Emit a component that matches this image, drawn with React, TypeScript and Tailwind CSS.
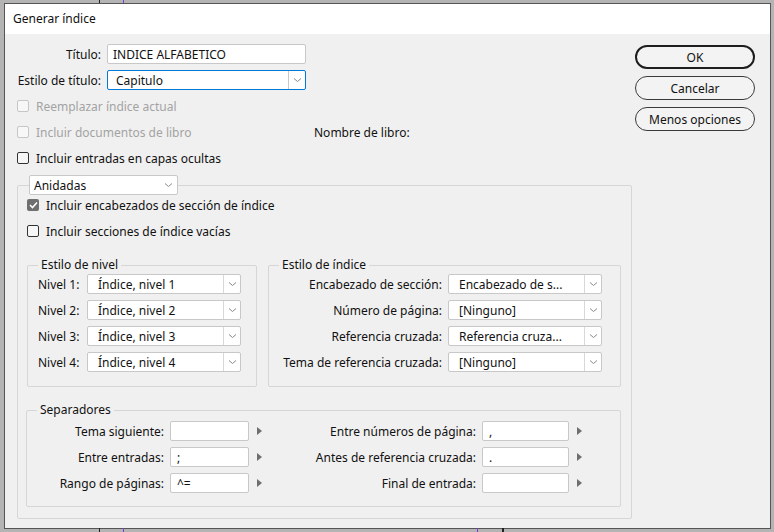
import React from "react";

const font = { fontFamily: '"Noto Sans", "Open Sans", sans-serif' };

function Chevron() {
  return (
    <svg width="9" height="6" viewBox="0 0 9 6" className="shrink-0">
      <path d="M1 1.5 L4.5 4.5 L8 1.5" fill="none" stroke="#8a8a8a" strokeWidth="1" />
    </svg>
  );
}

function Select({
  value,
  width,
  focused,
  pad = "pl-[10px]",
  divider = true,
}: {
  value: string;
  width: string;
  focused?: boolean;
  pad?: string;
  divider?: boolean;
}) {
  return (
    <div
      className={`${width} h-[20px] flex items-stretch bg-white rounded-[2px] border ${
        focused ? "border-[#0078d7]" : "border-[#c8c8c8]"
      }`}
    >
      <div className={`flex-1 flex items-center pt-[1px] ${pad} text-[12px] leading-none text-[#111] whitespace-nowrap overflow-hidden`}>
        {value}
      </div>
      <div
        className={`w-[17px] flex items-center justify-center ${
          divider ? (focused ? "border-l border-[#c8c8c8]" : "border-l border-[#d8d8d8]") : ""
        }`}
      >
        <Chevron />
      </div>
    </div>
  );
}

function TextBox({ value, width, pad = "pl-[5px]" }: { value: string; width: string; pad?: string }) {
  return (
    <div
      className={`${width} h-[20px] flex items-center pt-[1px] ${pad} bg-white rounded-[2px] border border-[#c8c8c8] text-[12px] leading-none text-[#111] whitespace-nowrap`}
    >
      {value}
    </div>
  );
}

function Check({ label, checked, disabled }: { label: string; checked?: boolean; disabled?: boolean }) {
  return (
    <div className="flex items-center">
      {checked ? (
        <div className="w-[12px] h-[12px] rounded-[2px] bg-[#6f6f6f] flex items-center justify-center">
          <svg width="9" height="8" viewBox="0 0 9 8">
            <path d="M1 4 L3.5 6.5 L8 1.5" fill="none" stroke="#fff" strokeWidth="1.6" />
          </svg>
        </div>
      ) : (
        <div
          className={`w-[12px] h-[12px] rounded-[2px] border bg-[#f7f7f7] ${
            disabled ? "border-[#c6c6c6]" : "border-[#333]"
          }`}
        />
      )}
      <span className={`ml-[7px] pt-[1px] text-[12px] whitespace-nowrap ${disabled ? "text-[#a3a3a3]" : "text-[#111]"}`}>
        {label}
      </span>
    </div>
  );
}

function Group({
  legend,
  className,
  children,
}: {
  legend: string;
  className: string;
  children: React.ReactNode;
}) {
  return (
    <div className={`border border-[#d6d6d6] rounded-[2px] flex flex-col ${className}`}>
      <div className="-mt-[9px] ml-[10px] self-start px-[3px] bg-[#f0f0f0] h-[16px] leading-[16px] text-[12px] text-[#111]">
        {legend}
      </div>
      {children}
    </div>
  );
}

function Arrow() {
  return (
    <svg width="5" height="8" viewBox="0 0 5 8" className="ml-[8px]">
      <path d="M0 0 L5 4 L0 8 Z" fill="#6e6e6e" />
    </svg>
  );
}

function SepRow({ label, value, labelW, inputW }: { label: string; value: string; labelW: string; inputW: string }) {
  return (
    <div className="flex items-center h-[20px]">
      <div className={`${labelW} pt-[1px] text-right text-[12px] text-[#111] whitespace-nowrap`}>{label}</div>
      <div className="ml-[6px]">
        <TextBox value={value} width={inputW} pad="pl-[6px]" />
      </div>
      <Arrow />
    </div>
  );
}

export default function App() {
  const niveles = ["Índice, nivel 1", "Índice, nivel 2", "Índice, nivel 3", "Índice, nivel 4"];
  const estilos = [
    ["Encabezado de sección:", "Encabezado de s..."],
    ["Número de página:", "[Ninguno]"],
    ["Referencia cruzada:", "Referencia cruza..."],
    ["Tema de referencia cruzada:", "[Ninguno]"],
  ];
  const sepLeft = [
    ["Tema siguiente:", ""],
    ["Entre entradas:", ";"],
    ["Rango de páginas:", "^="],
  ];
  const sepRight = [
    ["Entre números de página:", ","],
    ["Antes de referencia cruzada:", "."],
    ["Final de entrada:", ""],
  ];

  return (
    <div className="relative w-[774px] h-[532px] bg-[#b4b4b4] overflow-hidden pl-[4px] pt-[3px]" style={font}>
      {/* background app bits */}
      <div className="absolute left-[99px] top-0 w-[1px] h-[3px] bg-[#222]" />
      <div className="absolute left-[123px] top-0 w-[1px] h-[3px] bg-[#7a3fd0]" />
      <div className="absolute left-[99px] bottom-0 w-[1px] h-[4px] bg-[#222]" />
      <div className="absolute left-[123px] bottom-0 w-[1px] h-[4px] bg-[#7a3fd0]" />
      <div className="absolute left-[477px] bottom-0 w-[1px] h-[4px] bg-[#7a3fd0]" />
      <div className="absolute left-[502px] bottom-0 w-[2px] h-[4px] bg-[#222]" />

      {/* Dialog */}
      <div className="w-[767px] h-[526px] border border-[#555] bg-[#f0f0f0] flex flex-col">
        <div className="h-[30px] bg-white flex items-center pl-[8px] text-[12px] text-[#111]">Generar índice</div>

        <div className="flex pl-[12px] pt-[10px]">
          {/* Left column */}
          <div className="w-[615px] flex flex-col">
            <div className="flex items-center h-[20px]">
              <div className="w-[84px] pt-[1px] text-right text-[12px] text-[#111]">Título:</div>
              <div className="ml-[6px]">
                <TextBox value="INDICE ALFABETICO" width="w-[199px]" />
              </div>
            </div>
            <div className="flex items-center h-[20px] mt-[6px]">
              <div className="w-[84px] pt-[1px] text-right text-[12px] text-[#111] whitespace-nowrap">Estilo de título:</div>
              <div className="ml-[6px]">
                <Select value="Capitulo" width="w-[199px]" focused pad="pl-[8px]" />
              </div>
            </div>

            <div className="mt-[3px] flex flex-col">
              <div className="h-[26px] flex items-center">
                <Check label="Reemplazar índice actual" disabled />
              </div>
              <div className="h-[26px] flex items-center">
                <div className="w-[297px]">
                  <Check label="Incluir documentos de libro" disabled />
                </div>
                <span className="pt-[1px] text-[12px] text-[#111]">Nombre de libro:</span>
              </div>
              <div className="h-[26px] flex items-center">
                <Check label="Incluir entradas en capas ocultas" />
              </div>
            </div>

            {/* Outer group */}
            <div className="mt-[14px] h-[334px] border border-[#d6d6d6] rounded-[2px] flex flex-col">
              <div className="-mt-[11px] ml-[11px] self-start">
                <Select value="Anidadas" width="w-[149px]" pad="pl-[4px]" divider={false} />
              </div>
              <div className="ml-[9px] h-[20px] flex items-center">
                <Check label="Incluir encabezados de sección de índice" checked />
              </div>
              <div className="ml-[9px] mt-[6px] h-[20px] flex items-center">
                <Check label="Incluir secciones de índice vacías" />
              </div>

              <div className="flex ml-[9px] mt-[24px] gap-[11px]">
                <Group legend="Estilo de nivel" className="w-[230px] pb-[14px]">
                  <div className="mt-[1px] flex flex-col gap-[6px] pl-[10px]">
                    {niveles.map((n, i) => (
                      <div key={n} className="flex items-center h-[20px]">
                        <div className="w-[43px] pt-[1px] text-[12px] text-[#111] whitespace-nowrap">Nivel {i + 1}:</div>
                        <div className="ml-[6px]">
                          <Select value={n} width="w-[154px]" />
                        </div>
                      </div>
                    ))}
                  </div>
                </Group>
                <Group legend="Estilo de índice" className="w-[353px] pb-[14px]">
                  <div className="mt-[1px] flex flex-col gap-[6px]">
                    {estilos.map(([l, v]) => (
                      <div key={l} className="flex items-center h-[20px]">
                        <div className="w-[173px] pt-[1px] text-right text-[12px] text-[#111] whitespace-nowrap">{l}</div>
                        <div className="ml-[6px]">
                          <Select value={v} width="w-[154px]" />
                        </div>
                      </div>
                    ))}
                  </div>
                </Group>
              </div>

              <Group legend="Separadores" className="ml-[8px] mt-[23px] w-[595px] pb-[13px]">
                <div className="mt-[3px] flex">
                  <div className="w-[273px] flex flex-col gap-[6px]">
                    {sepLeft.map(([l, v]) => (
                      <SepRow key={l} label={l} value={v} labelW="w-[137px]" inputW="w-[79px]" />
                    ))}
                  </div>
                  <div className="flex flex-col gap-[6px]">
                    {sepRight.map(([l, v]) => (
                      <SepRow key={l} label={l} value={v} labelW="w-[176px]" inputW="w-[87px]" />
                    ))}
                  </div>
                </div>
              </Group>
            </div>
          </div>

          {/* Buttons */}
          <div className="ml-[3px] mt-[1px] w-[120px] flex flex-col gap-[7px]">
            <button className="h-[24px] pt-[1px] rounded-full border-2 border-[#1e1e1e] bg-[#f3f3f3] text-[12px] text-[#111]">
              OK
            </button>
            <button className="h-[24px] pt-[1px] rounded-full border border-[#3a3a3a] bg-[#f3f3f3] text-[12px] text-[#111]">
              Cancelar
            </button>
            <button className="h-[24px] pt-[1px] rounded-full border border-[#3a3a3a] bg-[#f3f3f3] text-[12px] text-[#111]">
              Menos opciones
            </button>
          </div>
        </div>
      </div>
    </div>
  );
}
